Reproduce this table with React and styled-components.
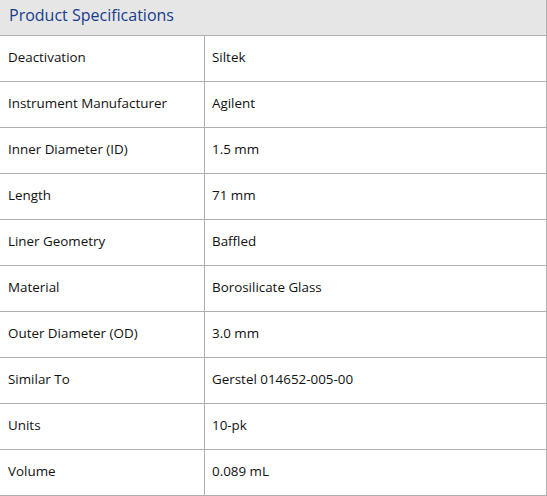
import styled, { createGlobalStyle } from 'styled-components';

const GlobalStyle = createGlobalStyle`
  * {
    margin: 0;
    padding: 0;
    box-sizing: border-box;
  }
  body {
    background: #fff;
    font-family: 'Open Sans', 'DejaVu Sans', sans-serif;
  }
`;

const Panel = styled.section`
  width: 547px;
  border-right: 1px solid #b0b0b0;
`;

const Header = styled.h2`
  height: 36px;
  background: #e6e6e6;
  border-bottom: 1px solid #b0b0b0;
  padding: 4px 9px 0;
  font-size: 16px;
  font-weight: 400;
  color: #173c8c;
`;

const Row = styled.div`
  display: grid;
  grid-template-columns: 205px 1fr;
  height: 46px;
  border-bottom: 1px solid #b0b0b0;
`;

const Cell = styled.div`
  display: flex;
  align-items: center;
  padding: 0 0 3px ${(p) => (p.$value ? '7px' : '8px')};
  font-size: 13.4px;
  color: #111;
  border-right: ${(p) => (p.$value ? '0' : '1px solid #b0b0b0')};
`;

const specs = [
  ['Deactivation', 'Siltek'],
  ['Instrument Manufacturer', 'Agilent'],
  ['Inner Diameter (ID)', '1.5 mm'],
  ['Length', '71 mm'],
  ['Liner Geometry', 'Baffled'],
  ['Material', 'Borosilicate Glass'],
  ['Outer Diameter (OD)', '3.0 mm'],
  ['Similar To', 'Gerstel 014652-005-00'],
  ['Units', '10-pk'],
  ['Volume', '0.089 mL'],
];

export default function App() {
  return (
    <>
      <GlobalStyle />
      <Panel>
        <Header>Product Specifications</Header>
        {specs.map(([label, value]) => (
          <Row key={label}>
            <Cell>{label}</Cell>
            <Cell $value>{value}</Cell>
          </Row>
        ))}
      </Panel>
    </>
  );
}
